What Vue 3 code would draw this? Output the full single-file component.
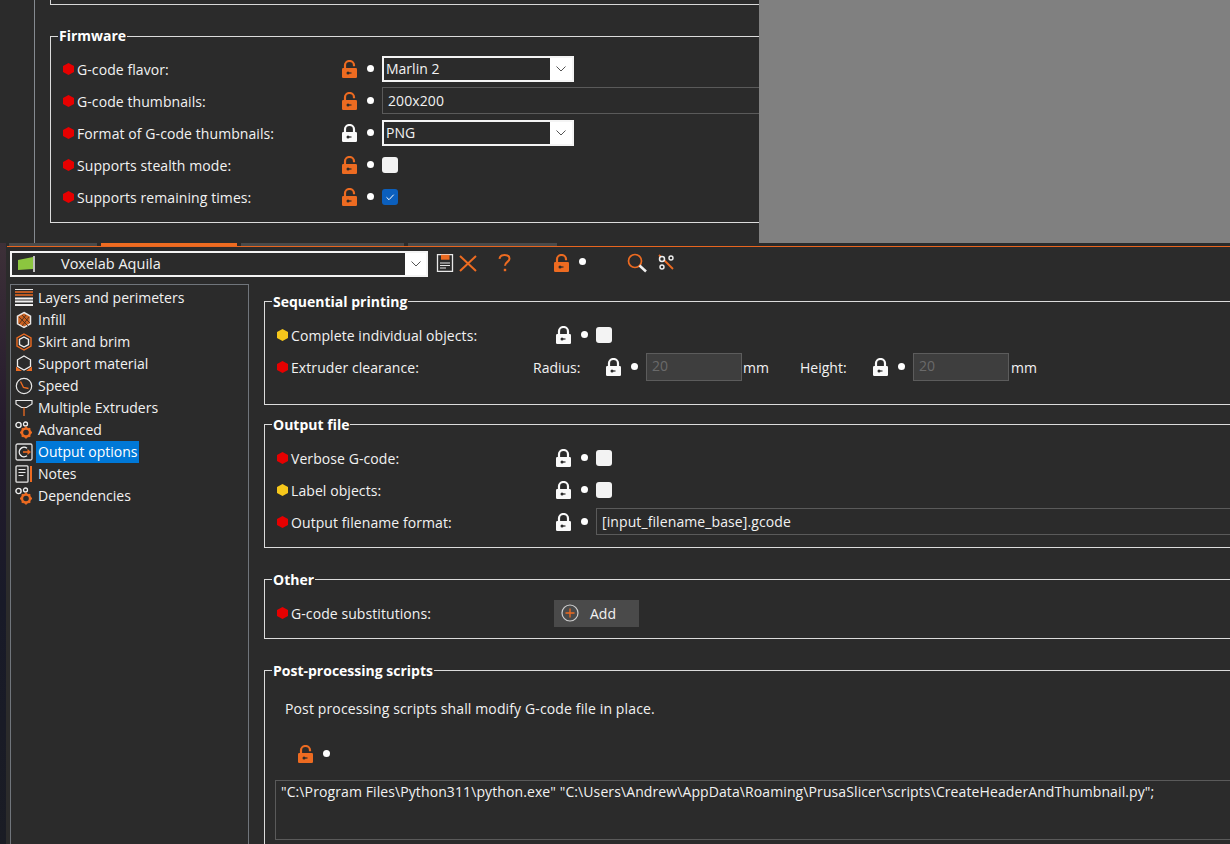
<script setup>
const firmware = [
  { label: 'G-code flavor:', lock: 'open', type: 'combo', value: 'Marlin 2' },
  { label: 'G-code thumbnails:', lock: 'open', type: 'text', value: '200x200' },
  { label: 'Format of G-code thumbnails:', lock: 'closed', type: 'combo', value: 'PNG' },
  { label: 'Supports stealth mode:', lock: 'open', type: 'check' },
  { label: 'Supports remaining times:', lock: 'open', type: 'checked' },
]
const tree = [
  { icon: 'i-layers', label: 'Layers and perimeters' },
  { icon: 'i-infill', label: 'Infill' },
  { icon: 'i-skirt', label: 'Skirt and brim' },
  { icon: 'i-support', label: 'Support material' },
  { icon: 'i-speed', label: 'Speed' },
  { icon: 'i-extruder', label: 'Multiple Extruders' },
  { icon: 'i-gears', label: 'Advanced' },
  { icon: 'i-output', label: 'Output options', selected: true },
  { icon: 'i-notes', label: 'Notes' },
  { icon: 'i-gears', label: 'Dependencies' },
]
const outputRows = [
  { label: 'Verbose G-code:', bullet: 'red', type: 'check' },
  { label: 'Label objects:', bullet: 'yellow', type: 'check' },
  { label: 'Output filename format:', bullet: 'red', type: 'text', value: '[input_filename_base].gcode' },
]
const script = '"C:\\Program Files\\Python311\\python.exe" "C:\\Users\\Andrew\\AppData\\Roaming\\PrusaSlicer\\scripts\\CreateHeaderAndThumbnail.py";'
</script>

<template>
  <div class="screen">
    <svg class="defs" aria-hidden="true">
      <symbol id="lock-closed" viewBox="0 0 15 18">
        <path d="M3 8.500V5.200a4.500 4.200 0 0 1 9 0v3.300" fill="none" stroke="currentColor" stroke-width="2.200" />
        <rect x="0" y="8" width="15" height="10" rx="1.200" fill="currentColor" />
        <circle cx="6" cy="13" r="1.500" fill="#2b2b2b" />
        <path d="M6 13h3.500" stroke="#2b2b2b" stroke-width="1.200" />
      </symbol>
      <symbol id="lock-open" viewBox="0 0 15 18">
        <path d="M3 8.500V5.200a4.500 4.200 0 0 1 9 0v1" fill="none" stroke="currentColor" stroke-width="2.200" />
        <rect x="0" y="8" width="15" height="10" rx="1.200" fill="currentColor" />
        <circle cx="6" cy="13" r="1.500" fill="#2b2b2b" />
        <path d="M6 13h3.500" stroke="#2b2b2b" stroke-width="1.200" />
      </symbol>
      <symbol id="chevron" viewBox="0 0 10 6">
        <path d="M0.500 0.500 5 5l4.500-4.500" fill="none" stroke="#555" stroke-width="1" />
      </symbol>
      <symbol id="i-layers" viewBox="0 0 18 18">
        <path d="M0 .5h18" stroke="#e8e8e8" stroke-width="1" />
        <path d="M0 3h18M0 6h18" stroke="#ed6b21" stroke-width="1.500" />
        <path d="M0 9.500h18M0 12.500h18M0 16h18" stroke="#efefef" stroke-width="2" />
      </symbol>
      <symbol id="i-infill" viewBox="0 0 18 18">
        <path d="M9 1.500 15.500 5.200v7.600L9 16.500l-6.500-3.700V5.200z" fill="#c9601f" stroke="#e8e8e8" stroke-width="1.500" />
        <path d="M4 6l9 9M7 4l8 8M11 4l-7 9M14 6l-7 9" stroke="#3a2a20" stroke-width="0.800" />
      </symbol>
      <symbol id="i-skirt" viewBox="0 0 18 18">
        <path d="M9 1 16 5v8l-7 4-7-4V5z" fill="none" stroke="#ed6b21" stroke-width="1.400" />
        <path d="M9 4 13.500 6.500v5L9 14l-4.500-2.500v-5z" fill="none" stroke="#efefef" stroke-width="1.400" />
      </symbol>
      <symbol id="i-support" viewBox="0 0 18 18">
        <path d="M9 1 15.500 4.800v6.500L9 15l-6.500-3.700V4.800z" fill="none" stroke="#efefef" stroke-width="1.300" />
        <path d="M1 11.500 7 16H1zM17 11.500 11 16h6z" fill="#ed6b21" />
      </symbol>
      <symbol id="i-speed" viewBox="0 0 18 18">
        <circle cx="9" cy="9" r="7.700" fill="none" stroke="#e8e8e8" stroke-width="1.200" />
        <path d="M5.500 4.500 8.500 10.500 13.500 11.500" fill="none" stroke="#ed6b21" stroke-width="1.400" />
      </symbol>
      <symbol id="i-extruder" viewBox="0 0 18 18">
        <path d="M1 1.500h16v3.500l-5.500 3.500h-5L1 5z" fill="none" stroke="#e8e8e8" stroke-width="1.200" />
        <path d="M9 8.500V17" stroke="#ed6b21" stroke-width="1.300" />
      </symbol>
      <symbol id="i-gears" viewBox="0 0 18 18">
        <circle cx="3.500" cy="4" r="2.600" fill="none" stroke="#efefef" stroke-width="1.400" />
        <circle cx="10.500" cy="3" r="2" fill="none" stroke="#efefef" stroke-width="1.300" />
        <circle cx="11" cy="11.500" r="4" fill="none" stroke="#ed6b21" stroke-width="2.400" />
        <path d="M11 5.500v12M5 11.500h12M6.800 7.300l8.400 8.400M15.200 7.300l-8.400 8.400" stroke="#ed6b21" stroke-width="1.800" stroke-dasharray="2 8" />
      </symbol>
      <symbol id="i-output" viewBox="0 0 18 18">
        <rect x="1" y="1" width="16" height="16" rx="1.500" fill="none" stroke="#dcdcdc" stroke-width="1.300" />
        <path d="M12 5.200A4.800 4.800 0 1 0 12 12.800" fill="none" stroke="#efefef" stroke-width="1.400" />
        <path d="M8 9h6" stroke="#ed6b21" stroke-width="1.600" />
        <path d="M12.500 6 16 9l-3.500 3z" fill="#ed6b21" />
      </symbol>
      <symbol id="i-notes" viewBox="0 0 18 18">
        <rect x="1" y="0.800" width="12" height="16.400" rx="1" fill="none" stroke="#e8e8e8" stroke-width="1.300" />
        <path d="M3.500 4.500h7M3.500 7.500h7M3.500 10.500h5" stroke="#e8e8e8" stroke-width="1.100" />
        <path d="M16 1v16" stroke="#ed6b21" stroke-width="2" />
      </symbol>
    </svg>

    <div class="top">
      <div class="rail">
        <div class="prev-box"></div>
        <fieldset class="group firmware">
          <legend>Firmware</legend>
          <div v-for="row in firmware" :key="row.label" class="row">
            <div class="label">
              <i class="hex red"></i><span>{{ row.label }}</span>
            </div>
            <svg class="lock" :class="row.lock === 'open' ? 'orange' : 'white'"><use :href="row.lock === 'open' ? '#lock-open' : '#lock-closed'" /></svg>
            <i class="dot"></i>
            <div v-if="row.type === 'combo'" class="combo">
              <span class="combo-value">{{ row.value }}</span>
              <span class="combo-btn"><svg class="chev"><use href="#chevron" /></svg></span>
            </div>
            <div v-else-if="row.type === 'text'" class="text-input">{{ row.value }}</div>
            <i v-else-if="row.type === 'check'" class="check"></i>
            <i v-else class="check on">
              <svg viewBox="0 0 16 16"><path d="M4.500 8.300 7 10.700l4.700-5" fill="none" stroke="#fff" stroke-width="1" /></svg>
            </i>
          </div>
        </fieldset>
      </div>
      <div class="grey"></div>
    </div>

    <div class="bottom">
      <div class="desk"></div>
      <div class="panel">
        <div class="tabs">
          <i class="tab t1"></i><i class="tab t2"></i><i class="tab t3"></i><i class="tab t4"></i>
        </div>
        <div class="toolbar">
          <div class="combo preset">
            <span class="combo-value preset-value">
              <svg class="flag" viewBox="0 0 18 17"><path d="M0 4 15 1v12L0 14z" fill="#8cc63f" /><path d="M16 0v16" stroke="#f2f2f2" stroke-width="1.500" /></svg>
              <span>Voxelab Aquila</span>
            </span>
            <span class="combo-btn"><svg class="chev"><use href="#chevron" /></svg></span>
          </div>
          <svg class="tool save" viewBox="0 0 18 18">
            <path d="M1.500.7h15v16.600h-15z" fill="none" stroke="#e8e8e8" stroke-width="1.300" />
            <path d="M5 .7h8.500v5H5z" fill="#ed6b21" />
            <path d="M4 9h10M4 11.500h10M4 14h6" stroke="#e8e8e8" stroke-width="1.200" />
          </svg>
          <svg class="tool x" viewBox="0 0 18 17"><path d="M1 1l16 15M17 1 1 16" stroke="#ed6b21" stroke-width="2" /></svg>
          <svg class="tool help" viewBox="0 0 13 18">
            <path d="M1.500 4.800C1.800 2 4 1 6.500 1c3 0 5 1.500 5 3.800 0 3-4.500 3.300-4.500 7" fill="none" stroke="#ed6b21" stroke-width="2" />
            <rect x="5.800" y="14.800" width="2.400" height="2.400" fill="#ed6b21" />
          </svg>
          <svg class="lock orange tb-lock"><use href="#lock-open" /></svg>
          <i class="dot tb-dot"></i>
          <svg class="tool search" viewBox="0 0 20 20">
            <circle cx="8" cy="8" r="6.500" fill="none" stroke="#ed6b21" stroke-width="1.700" />
            <path d="M12.500 12.500 19 18.500" stroke="#efefef" stroke-width="2.500" />
          </svg>
          <svg class="tool wrench" viewBox="0 0 17 17">
            <path d="M1 1 15 15" stroke="#ed6b21" stroke-width="1.800" />
            <circle cx="4" cy="5" r="2.500" fill="#2b2b2b" stroke="#efefef" stroke-width="1.500" />
            <circle cx="13" cy="4" r="2" fill="#2b2b2b" stroke="#efefef" stroke-width="1.400" />
            <circle cx="4" cy="13" r="2" fill="#2b2b2b" stroke="#efefef" stroke-width="1.400" />
          </svg>
        </div>

        <div class="main">
          <ul class="tree">
            <li v-for="item in tree" :key="item.label" class="tree-item">
              <svg class="tree-icon"><use :href="'#' + item.icon" /></svg>
              <span class="tree-label" :class="{ selected: item.selected }">{{ item.label }}</span>
            </li>
          </ul>

          <div class="settings">
            <fieldset class="group seq">
              <legend>Sequential printing</legend>
              <div class="row">
                <div class="label"><i class="hex yellow"></i><span>Complete individual objects:</span></div>
                <svg class="lock white"><use href="#lock-closed" /></svg>
                <i class="dot"></i>
                <i class="check"></i>
              </div>
              <div class="row">
                <div class="label short"><i class="hex red"></i><span>Extruder clearance:</span></div>
                <span class="side-label radius">Radius:</span>
                <svg class="lock white"><use href="#lock-closed" /></svg>
                <i class="dot"></i>
                <span class="num-input n1">20</span>
                <span class="unit u1">mm</span>
                <span class="side-label height">Height:</span>
                <svg class="lock white"><use href="#lock-closed" /></svg>
                <i class="dot"></i>
                <span class="num-input n2">20</span>
                <span class="unit u2">mm</span>
              </div>
            </fieldset>

            <fieldset class="group out">
              <legend>Output file</legend>
              <div v-for="row in outputRows" :key="row.label" class="row">
                <div class="label"><i class="hex" :class="row.bullet"></i><span>{{ row.label }}</span></div>
                <svg class="lock white"><use href="#lock-closed" /></svg>
                <i class="dot"></i>
                <i v-if="row.type === 'check'" class="check"></i>
                <div v-else class="text-input wide">{{ row.value }}</div>
              </div>
            </fieldset>

            <fieldset class="group other">
              <legend>Other</legend>
              <div class="row">
                <div class="label add-label"><i class="hex red"></i><span>G-code substitutions:</span></div>
                <button class="add" type="button">
                  <svg viewBox="0 0 18 18"><circle cx="9" cy="9" r="8" fill="none" stroke="#cfcfcf" stroke-width="1.200" /><path d="M9 4.500v9M4.500 9h9" stroke="#ed6b21" stroke-width="1.300" /></svg>
                  <span>Add</span>
                </button>
              </div>
            </fieldset>

            <fieldset class="group post">
              <legend>Post-processing scripts</legend>
              <p class="note">Post processing scripts shall modify G-code file in place.</p>
              <div class="post-lock">
                <svg class="lock orange"><use href="#lock-open" /></svg>
                <i class="dot"></i>
              </div>
              <div class="script">{{ script }}</div>
            </fieldset>
          </div>
        </div>
      </div>
    </div>
  </div>
</template>

<style>
html, body { margin: 0; background: #2b2b2b; }
</style>

<style scoped>
.screen {
  width: 1230px;
  height: 844px;
  overflow: hidden;
  background: #2b2b2b;
  color: #f2f2f2;
  font-family: "Open Sans", "Noto Sans", "Liberation Sans", sans-serif;
  font-size: 14px;
  display: flex;
  flex-direction: column;
}
.defs { position: absolute; width: 0; height: 0; }
i { display: block; flex: none; }

.top { height: 243px; display: flex; flex: none; }
.rail {
  width: 709px;
  margin-left: 34px;
  padding-left: 15px;
  border-left: 1px solid #858a90;
  flex: none;
}
.prev-box {
  height: 4px;
  border-left: 1px solid #d8d8d8;
  border-bottom: 1px solid #d8d8d8;
  margin-bottom: 21px;
}
.grey { flex: 1; background: #808080; }

.group {
  margin: 0;
  padding: 8px 0 9px 12px;
  min-width: 0;
  border: 1px solid #dcdcdc;
  border-right: none;
}
.group legend {
  margin-left: -5px;
  padding: 0 1px;
  height: 20px;
  line-height: 19px;
  font-weight: 700;
  font-size: 14px;
  color: #fff;
}
.settings .group legend { line-height: 21px; }
.settings .post legend { margin-left: -3px; }
.firmware { padding-top: 7px; }

.row { display: flex; align-items: center; height: 32px; }
.label { width: 279px; flex: none; display: flex; align-items: center; gap: 3px; letter-spacing: 0.08px; }
.label.short { width: 256px; }
.label.add-label { width: 277px; }
.hex {
  width: 11px;
  height: 12px;
  clip-path: polygon(50% 0, 100% 25%, 100% 75%, 50% 100%, 0 75%, 0 25%);
}
.hex.red { background: #e60000; }
.hex.yellow { background: #f6c71b; }
.lock { width: 15px; height: 18px; flex: none; }
.orange { color: #ed6b21; }
.white { color: #fafafa; }
.dot {
  width: 7px;
  height: 7px;
  border-radius: 50%;
  background: #fff;
  margin: 0 8px 2px 10px;
}

.combo {
  width: 192px;
  height: 26px;
  box-sizing: border-box;
  border: 2px solid #f4f4f4;
  display: flex;
  align-items: center;
  background: #2b2b2b;
  flex: none;
}
.combo-value { flex: 1; padding-left: 2px; line-height: 22px; }
.combo-btn {
  width: 22px;
  height: 22px;
  background: #fff;
  display: flex;
  align-items: center;
  justify-content: center;
  flex: none;
}
.chev { width: 10px; height: 6px; }
.text-input {
  flex: 1;
  height: 27px;
  line-height: 25px;
  margin-bottom: 1px;
  box-sizing: border-box;
  border: 1px solid #5a5a5a;
  border-right: none;
  padding-left: 5px;
  letter-spacing: 0.1px;
}
.check {
  width: 16px;
  height: 16px;
  border-radius: 3px;
  background: #f3f3f3;
  margin-bottom: 1px;
}
.check.on { background: #0b5fbd; }
.check.on svg { display: block; width: 16px; height: 16px; }

.bottom { flex: 1; display: flex; min-height: 0; }
.desk {
  width: 6px;
  flex: none;
  background: linear-gradient(180deg, #3d3038 0, #241a2c 30%, #181a28 60%, #1a1c24 100%);
}
.panel { flex: 1; min-width: 0; display: flex; flex-direction: column; }
.tabs { height: 3px; display: flex; flex: none; padding-left: 3px; gap: 4px; }
.tab { height: 3px; background: #4a4a4a; }
.t1 { width: 88px; }
.t2 { width: 136px; background: #ed6b21; }
.t3 { width: 163px; }
.t4 { width: 149px; }
.toolbar {
  height: 38px;
  flex: none;
  box-sizing: border-box;
  border-top: 1px solid #e8651f;
  margin-left: 1px;
  padding: 4px 0 0 3px;
  display: flex;
  align-items: flex-start;
}
.preset { width: 418px; }
.preset .combo-btn { width: 21px; }
.preset-value { display: flex; align-items: center; padding-left: 6px; font-size: 14.5px; }
.flag { width: 18px; height: 17px; margin-right: 25px; }
.tool { display: block; flex: none; }
.save { width: 18px; height: 18px; margin: 3px 0 0 8px; }
.x { width: 18px; height: 17px; margin: 4px 0 0 5px; }
.help { width: 13px; height: 18px; margin: 3px 0 0 21px; }
.tb-lock { margin: 3px 0 0 43px; }
.tb-dot { margin: 7px 0 0 10px; }
.search { width: 20px; height: 20px; margin: 2px 0 0 41px; }
.wrench { width: 17px; height: 17px; margin: 3px 0 0 11px; }

.main { flex: 1; display: flex; min-height: 0; }
.tree {
  list-style: none;
  margin: 0 0 0 4px;
  padding: 2px 0 0 4px;
  width: 233px;
  flex: none;
  height: 600px;
  border: 1px solid #70757b;
}
.tree-item { height: 22px; display: flex; align-items: center; }
.tree-icon { width: 18px; height: 18px; flex: none; margin-right: 3px; }
.tree-label { padding: 0 2px; line-height: 22px; }
.tree-label.selected { background: #0078d7; color: #fff; }

.settings { margin: 7px 0 0 15px; width: 966px; flex: none; }
.settings .group + .group { margin-top: 21px; }
.seq { padding-bottom: 21px; }
.settings .group + .out { margin-top: 9px; }
.side-label { flex: none; }
.radius { width: 73px; }
.height { width: 73px; }
.num-input {
  height: 28px;
  line-height: 24px;
  box-sizing: border-box;
  flex: none;
  background: #3e3e3e;
  border: 1px solid #5c5c5c;
  color: #6a6a6a;
  padding-left: 5px;
  margin-bottom: 1px;
}
.n1 { width: 96px; }
.n2 { width: 96px; }
.unit { flex: none; }
.u1 { width: 58px; padding-left: 1px; box-sizing: border-box; }
.u2 { padding-left: 2px; }
.wide { margin-right: -2px; }
.add {
  width: 85px;
  height: 27px;
  border: none;
  padding: 0 0 0 7px;
  background: #4a4a4a;
  color: #f2f2f2;
  font: inherit;
  display: flex;
  align-items: center;
  gap: 11px;
}
.add svg { width: 18px; height: 18px; flex: none; }

.post { padding: 0 0 0 10px; height: 200px; }
.note { margin: 0; padding: 19px 0 0 10px; line-height: 20px; letter-spacing: 0.13px; }
.post-lock { display: flex; align-items: center; height: 24px; margin: 23px 0 0 23px; }
.script {
  margin-top: 14px;
  height: 60px;
  margin-right: -4px;
  box-sizing: border-box;
  border: 1px solid #5a5a5a;
  padding: 1px 0 0 5px;
  line-height: 20px;
  white-space: nowrap;
  letter-spacing: 0.1px;
}
</style>
